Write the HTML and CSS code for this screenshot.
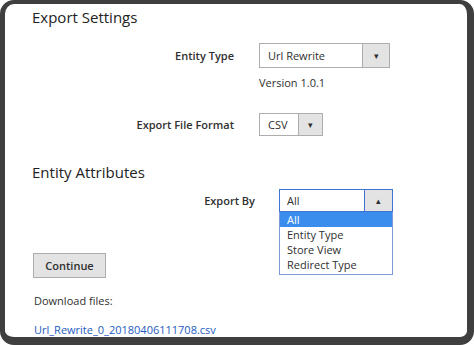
FILE: index.html
```html
<!DOCTYPE html>
<html lang="en">
<head>
  <meta charset="UTF-8" />
  <title>Export Settings</title>
  <link rel="stylesheet" href="styles.css">
</head>
<body>
  <div class="frame">
    <h2 class="title">Export Settings</h2>
    <div class="fieldset settings">
      <label class="label">Entity Type</label>
      <div class="select entity">
        <span class="value">Url Rewrite</span>
        <span class="btn">&#9662;</span>
      </div>
      <span></span>
      <div class="note">Version 1.0.1</div>
      <label class="label format-label">Export File Format</label>
      <div class="select format format-select">
        <span class="value">CSV</span>
        <span class="btn">&#9662;</span>
      </div>
    </div>

    <h2 class="title attrs">Entity Attributes</h2>
    <div class="fieldset attributes">
      <label class="label">Export By</label>
      <div class="dropdown">
        <div class="select open">
          <span class="value">All</span>
          <span class="btn">&#9652;</span>
        </div>
        <ul class="options">
          <li class="selected">All</li>
          <li>Entity Type</li>
          <li>Store View</li>
          <li>Redirect Type</li>
        </ul>
      </div>
    </div>

    <button class="continue" type="button">Continue</button>
    <div class="download">Download files:</div>
    <a class="file" href="#">Url_Rewrite_0_20180406111708.csv</a>
  </div>
</body>
</html>
```

FILE: styles.css
```css
body {
  margin: 0;
  background: #fff;
  font-family: 'Open Sans', 'Noto Sans', sans-serif;
  color: #303030;
}
.frame {
  box-sizing: border-box;
  width: 474px;
  height: 345px;
  border-style: solid;
  border-color: #3f3f3f;
  border-width: 4px 7px 8px 5px;
  border-radius: 14px;
  padding: 3px 0 0 27px;
}
.title {
  margin: 0;
  font-size: 15px;
  font-weight: 400;
  line-height: 20px;
  color: #222;
}
.title.attrs {
  margin-top: 26px;
}
.fieldset {
  display: grid;
  align-items: center;
  font-size: 11px;
}
.settings {
  grid-template-columns: 202px auto;
  column-gap: 25px;
  margin-top: 16px;
}
.attributes {
  grid-template-columns: 223px auto;
  column-gap: 24px;
  margin-top: 7px;
}
.label {
  text-align: right;
  font-weight: 600;
  color: #303030;
}
.note {
  line-height: 16px;
  margin-top: 7px;
}
.format-label, .format-select {
  margin-top: 22px;
}
.select {
  box-sizing: border-box;
  display: flex;
  border: 1px solid #adadad;
  background: #fff;
  height: 25px;
}
.select .value {
  flex: 1;
  padding-left: 8px;
  line-height: 23px;
}
.select .btn {
  border-left: 1px solid #adadad;
  background: #e3e3e3;
  font-size: 9px;
  line-height: 23px;
  text-align: center;
}
.entity {
  width: 131px;
}
.entity .btn {
  width: 26px;
}
.format {
  width: 64px;
  height: 23px;
}
.format .value, .format .btn {
  line-height: 21px;
}
.format .btn {
  width: 23px;
}
.dropdown {
  position: relative;
  width: 114px;
}
.select.open {
  height: 23px;
  border-color: #3f73d2;
}
.open .value {
  line-height: 21px;
  padding-left: 7px;
}
.open .btn {
  width: 27px;
  line-height: 21px;
  border-left-color: #3f73d2;
}
.options {
  position: absolute;
  top: 23px;
  left: 0;
  right: 0;
  margin: 0;
  padding: 0 0 2px;
  list-style: none;
  background: #fff;
  border: 1px solid #7f9bd6;
  border-top: none;
}
.options li {
  line-height: 15px;
  padding-left: 7px;
}
.options .selected {
  background: #3a8ded;
  color: #fff;
}
.continue {
  display: block;
  box-sizing: border-box;
  margin-top: 41px;
  margin-left: 1px;
  width: 73px;
  height: 25px;
  border: 1px solid #adadad;
  background: #e3e3e3;
  font-family: inherit;
  font-size: 11px;
  font-weight: 600;
  color: #303030;
  padding: 0;
}
.download {
  margin-top: 15px;
  margin-left: 2px;
  font-size: 11px;
  line-height: 16px;
}
.file {
  display: block;
  margin-top: 13px;
  margin-left: 2px;
  font-size: 11px;
  line-height: 16px;
  color: #1e5cc0;
  text-decoration: none;
}
```
